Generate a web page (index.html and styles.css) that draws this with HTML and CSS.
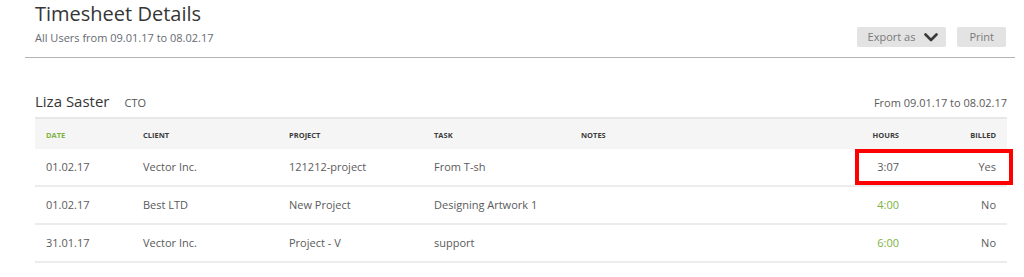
FILE: index.html
```html
<!DOCTYPE html>
<html>
<head>
<meta charset="utf-8">
<link rel="stylesheet" href="styles.css">
</head>
<body>
<div class="page">
  <header class="top">
    <div class="heading">
      <h1 class="title">Timesheet Details</h1>
      <div class="subtitle">All Users from 09.01.17 to 08.02.17</div>
    </div>
    <div class="actions">
      <button class="btn btn-export">Export as
        <svg class="chev" width="14" height="9" viewBox="0 0 14 9"><path d="M1.5 1.5 L7 7 L12.5 1.5" fill="none" stroke="#3a3a3a" stroke-width="2.6" stroke-linecap="round" stroke-linejoin="round"/></svg>
      </button>
      <button class="btn">Print</button>
    </div>
  </header>

  <section class="user">
    <div class="user-head">
      <div class="user-name"><span class="name">Liza Saster</span><span class="role">CTO</span></div>
      <div class="range">From 09.01.17 to 08.02.17</div>
    </div>

    <div class="table">
      <div class="row head">
        <div class="cell date-h">DATE</div>
        <div class="cell">CLIENT</div>
        <div class="cell">PROJECT</div>
        <div class="cell">TASK</div>
        <div class="cell">NOTES</div>
        <div class="cell num">HOURS</div>
        <div class="cell num">BILLED</div>
      </div>
      <div class="row body marked">
        <div class="cell">01.02.17</div>
        <div class="cell">Vector Inc.</div>
        <div class="cell">121212-project</div>
        <div class="cell">From T-sh</div>
        <div class="cell"></div>
        <div class="cell num">3:07</div>
        <div class="cell num">Yes</div>
        <div class="highlight"></div>
      </div>
      <div class="row body">
        <div class="cell">01.02.17</div>
        <div class="cell">Best LTD</div>
        <div class="cell">New Project</div>
        <div class="cell">Designing Artwork 1</div>
        <div class="cell"></div>
        <div class="cell num green">4:00</div>
        <div class="cell num">No</div>
      </div>
      <div class="row body">
        <div class="cell">31.01.17</div>
        <div class="cell">Vector Inc.</div>
        <div class="cell">Project - V</div>
        <div class="cell">support</div>
        <div class="cell"></div>
        <div class="cell num green">6:00</div>
        <div class="cell num">No</div>
      </div>
      <div class="row body">
        <div class="cell">30.01.17</div>
        <div class="cell">Vector Inc.</div>
        <div class="cell">Project - V</div>
        <div class="cell">Copy Task</div>
        <div class="cell"></div>
        <div class="cell num green">8:00</div>
        <div class="cell num">No</div>
      </div>
    </div>
  </section>
</div>
</body>
</html>
```

FILE: styles.css
```css
* { box-sizing: border-box; }
html, body { margin: 0; padding: 0; background: #fff; }
body {
  font-family: "Open Sans", "Liberation Sans", sans-serif;
  color: #555;
  overflow: hidden;
}
.page { padding: 0 9px 0 25px; }

.top {
  display: flex;
  justify-content: space-between;
  align-items: flex-end;
  padding: 0 9px 0 10px;
  border-bottom: 1px solid #b4b4b4;
  height: 58px;
}
.heading { align-self: flex-start; }
.title {
  margin: 0;
  font-size: 20px;
  line-height: 28px;
  font-weight: 400;
  color: #363636;
}
.subtitle {
  margin-top: 2px;
  font-size: 11px;
  line-height: 16px;
  color: #666a72;
}
.actions {
  display: flex;
  gap: 11px;
  padding-bottom: 10px;
}
.btn {
  display: flex;
  align-items: center;
  height: 20px;
  padding: 0 12px;
  border: none;
  border-radius: 2px;
  background: #e3e3e3;
  color: #7a7a7a;
  font-family: "Open Sans", "Liberation Sans", sans-serif;
  font-size: 11px;
  line-height: 20px;
}
.btn-export { padding: 0 8px 0 11px; gap: 9px; }
.chev { display: block; }

.user { margin: 32px 8px 0 10px; }
.user-head {
  display: flex;
  justify-content: space-between;
  align-items: baseline;
  height: 20px;
}
.name { font-size: 15px; line-height: 20px; color: #363636; }
.role { font-size: 11px; margin-left: 15px; color: #555; }
.range { font-size: 11px; color: #5a5a5a; }

.table { margin-top: 7px; }
.row {
  display: grid;
  grid-template-columns: 97px 146px 145px 147px 1fr 80px 97px;
  align-items: center;
}
.cell { padding-left: 11px; white-space: nowrap; }
.cell.num { padding-left: 0; padding-right: 11px; text-align: right; }

.row.head {
  height: 32px;
  background: #f5f5f5;
  border-top: 2px solid #e7e7e7;
  font-size: 7.5px;
  font-weight: 700;
  color: #3c3c3c;
  padding-top: 1px;
}
.date-h { color: #7cb342; }

.row.body {
  position: relative;
  height: 38px;
  padding-bottom: 2px;
  border-bottom: 2px solid #ececec;
  font-size: 11px;
  color: #5a5a5a;
}
.green { color: #7cb342; }

.highlight {
  position: absolute;
  left: 820px;
  top: 0;
  width: 158px;
  height: 36px;
  border: 4px solid #ff0000;
}
```
